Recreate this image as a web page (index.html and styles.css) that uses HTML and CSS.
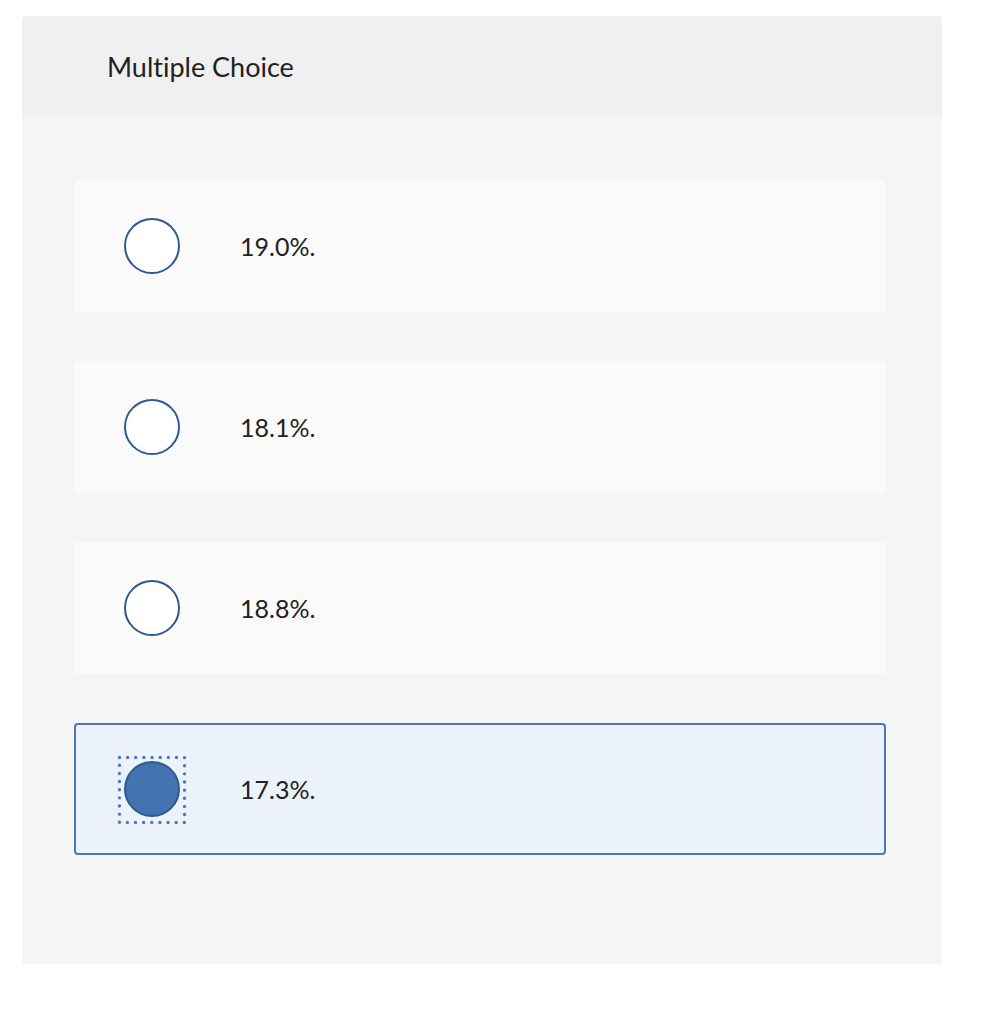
FILE: index.html
```html
<!DOCTYPE html>
<html lang="en">
<head>
<meta charset="utf-8">
<title>Multiple Choice</title>
<link rel="stylesheet" href="styles.css">
</head>
<body>
<div class="card">
  <div class="card-header">
    <h2 class="title">Multiple Choice</h2>
  </div>
  <div class="card-body">
    <div class="options">
      <div class="option">
        <span class="radio"></span>
        <span class="label">19.0%.</span>
      </div>
      <div class="option">
        <span class="radio"></span>
        <span class="label">18.1%.</span>
      </div>
      <div class="option">
        <span class="radio"></span>
        <span class="label">18.8%.</span>
      </div>
      <div class="option selected">
        <span class="radio checked">
          <svg class="focus-ring" width="70" height="70" viewBox="0 0 70 70">
            <rect x="2.5" y="2.5" width="65" height="65" fill="none" stroke="#4a78c2" stroke-width="3.4" stroke-linecap="round" stroke-dasharray="0.01 8.125"/>
          </svg>
        </span>
        <span class="label">17.3%.</span>
      </div>
    </div>
  </div>
</div>
</body>
</html>
```

FILE: styles.css
```css
* { box-sizing: border-box; }

body {
  margin: 0;
  background: #ffffff;
  font-family: Lato, "Open Sans", "Liberation Sans", sans-serif;
  font-variant-ligatures: none;
  color: #222222;
}

.card {
  margin: 16px 0 0 22px;
  width: 920px;
  height: 948px;
  border-radius: 4px;
  overflow: hidden;
  background: #f5f5f5;
}

.card-header {
  height: 100px;
  background: #f0f0f0;
  display: flex;
  align-items: center;
  padding-left: 85px;
}

.title {
  margin: 0;
  font-size: 27px;
  font-weight: 400;
  color: #222222;
}

.card-body {
  padding: 64px 56px 0 52px;
}

.options {
  display: flex;
  flex-direction: column;
  gap: 49px;
}

.option {
  height: 132px;
  background: #fafafa;
  border: 2px solid transparent;
  border-radius: 4px;
  display: flex;
  align-items: center;
  padding-left: 48px;
}

.option.selected {
  background: #ebf2fa;
  border-color: #4a78b8;
}

.radio {
  position: relative;
  width: 56px;
  height: 56px;
  border-radius: 50%;
  border: 2px solid #2e5a8e;
  background: #ffffff;
  flex: none;
}

.radio.checked {
  background: #4573b2;
}

.focus-ring {
  position: absolute;
  left: -9px;
  top: -8px;
}

.label {
  margin-left: 60px;
  font-size: 25px;
  color: #222222;
}
```
